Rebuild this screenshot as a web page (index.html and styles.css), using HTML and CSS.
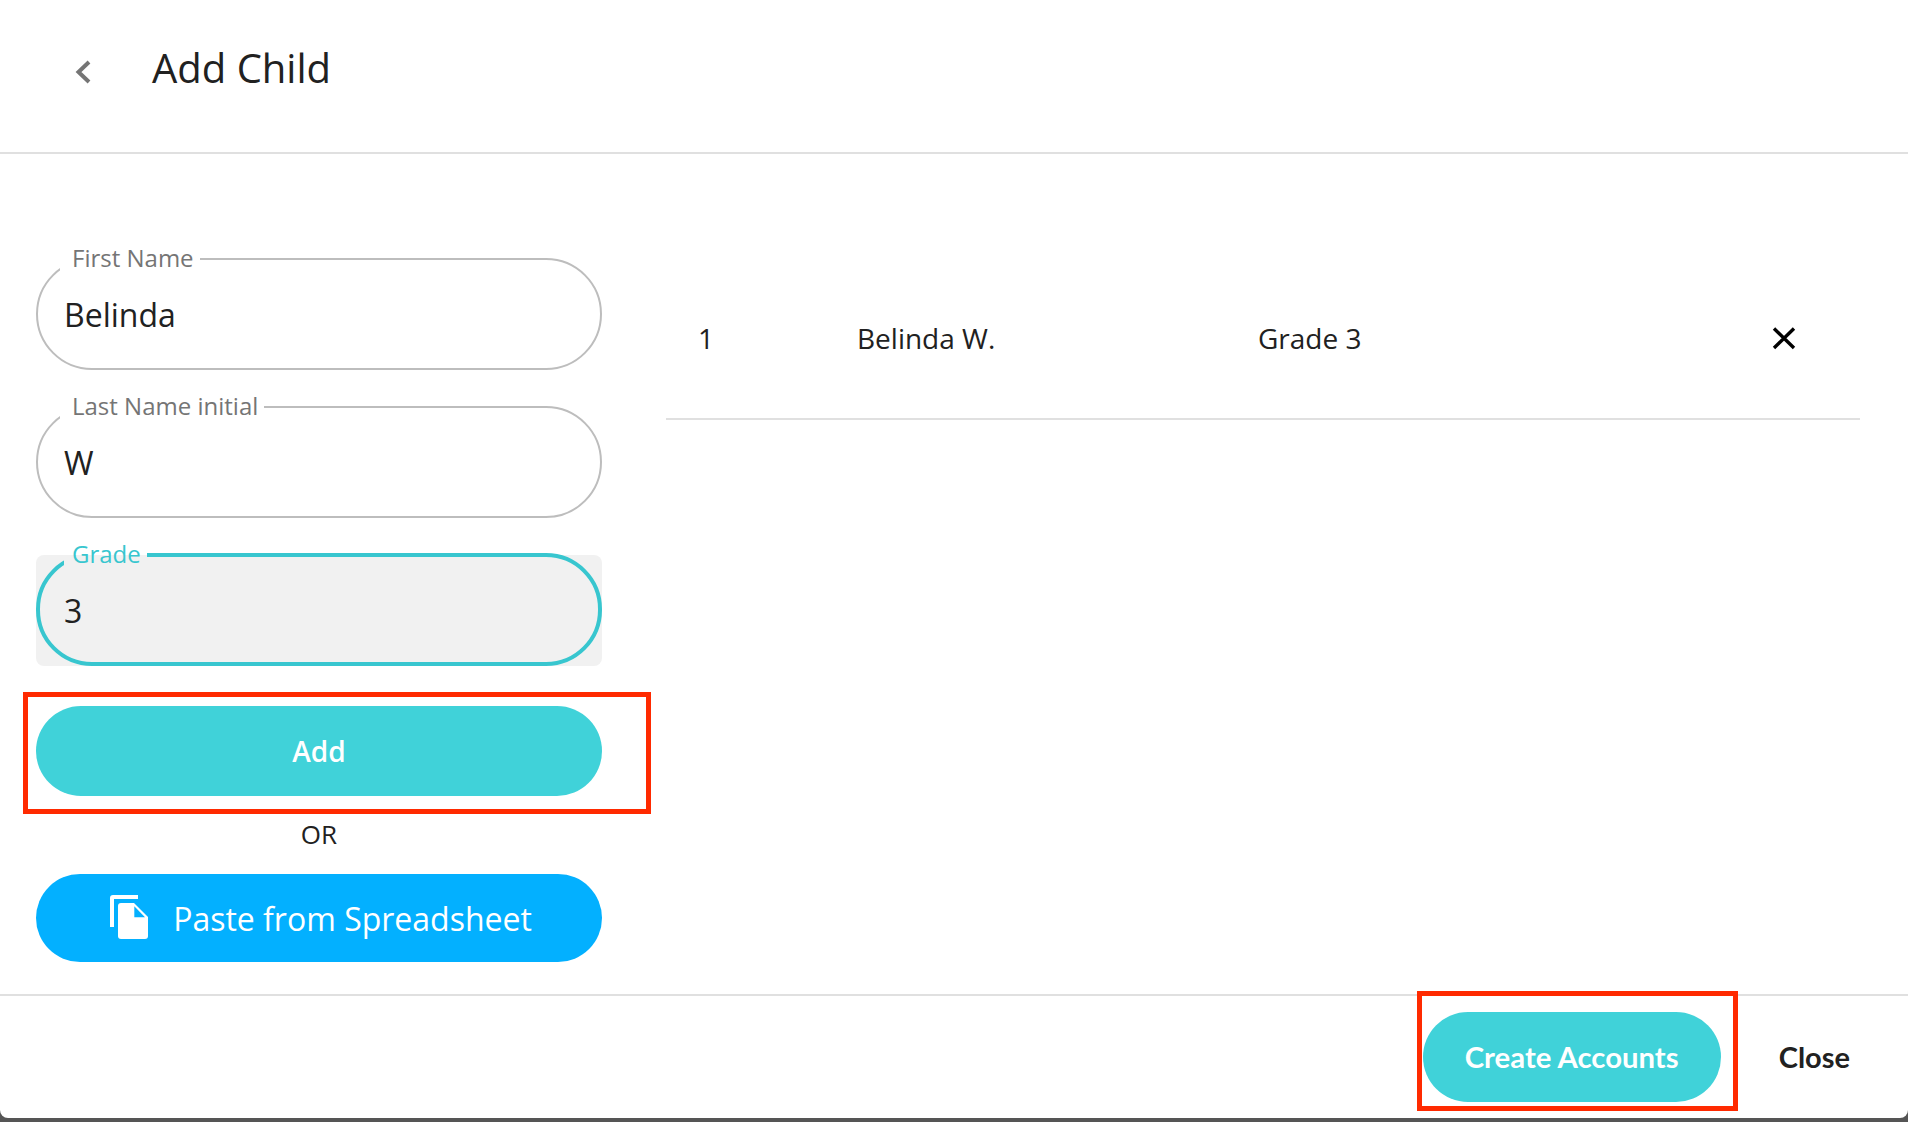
FILE: index.html
```html
<!DOCTYPE html>
<html lang="en">
<head>
<meta charset="utf-8">
<title>Add Child</title>
<link rel="stylesheet" href="styles.css">
</head>
<body>
<main class="modal">
  <header class="header">
    <button class="back" aria-label="Back">
      <svg class="back-icon" viewBox="0 0 16 24"><path d="M14 2 3.5 12 14 22"/></svg>
    </button>
    <h1 class="title">Add Child</h1>
  </header>
  <section class="body">
    <form class="form">
      <div class="fields">
        <div class="field">
          <fieldset class="outline">
            <legend class="label">First Name</legend>
            <input class="input" value="Belinda">
          </fieldset>
        </div>
        <div class="field">
          <fieldset class="outline">
            <legend class="label">Last Name initial</legend>
            <input class="input" value="W">
          </fieldset>
        </div>
        <div class="field field-focused">
          <fieldset class="outline">
            <legend class="label">Grade</legend>
            <input class="input" value="3">
          </fieldset>
        </div>
      </div>
      <div class="add-wrap">
        <button type="button" class="btn btn-teal btn-add">Add</button>
        <span class="mark mark-add"></span>
      </div>
      <div class="or">OR</div>
      <button type="button" class="btn btn-paste">
        <svg class="paste-icon" viewBox="0 0 38 44">
          <path class="paste-white" d="M0 32V3a3 3 0 0 1 3-3h25v4H4v28z"/>
          <path class="paste-white" d="M11 8h13l14 14v19a3 3 0 0 1-3 3H11a3 3 0 0 1-3-3V11a3 3 0 0 1 3-3z"/>
          <path class="paste-fold" d="M24.3 11.3v11H35z"/>
        </svg>
        <span>Paste from Spreadsheet</span>
      </button>
    </form>
    <div class="list">
      <div class="row">
        <span>1</span>
        <span>Belinda W.</span>
        <span>Grade 3</span>
        <svg class="remove" viewBox="0 0 24 24"><path d="M2 2.5 22 22M22 2.5 2 22"/></svg>
      </div>
    </div>
  </section>
  <footer class="footer">
    <div class="create-wrap">
      <button type="button" class="btn btn-teal btn-create">Create Accounts</button>
      <span class="mark mark-create"></span>
    </div>
    <button type="button" class="close">Close</button>
  </footer>
</main>
</body>
</html>
```
FILE: styles.css
```css
* { box-sizing: border-box; }
html, body { margin: 0; height: 100%; }
body {
  background: #555;
  font-family: "Open Sans", "Noto Sans", sans-serif;
  color: #212121;
  overflow: hidden;
}
button { font-family: inherit; border: 0; cursor: pointer; }

.modal {
  height: 1118px;
  background: #fff;
  border-radius: 0 0 8px 8px;
  display: flex;
  flex-direction: column;
}

/* header */
.header {
  height: 154px;
  flex: none;
  border-bottom: 2px solid #e0e0e0;
  display: flex;
  align-items: center;
  padding-left: 75px;
  padding-bottom: 17px;
}
.back {
  background: none;
  padding: 0;
  width: 77px;
  height: 24px;
  display: flex;
  margin-top: 8px;
}
.back-icon {
  width: 16px;
  height: 24px;
  fill: none;
  stroke: #757575;
  stroke-width: 4;
}
.title {
  margin: 0;
  font-size: 40px;
  font-weight: 400;
  line-height: 54px;
}

/* body */
.body {
  flex: 1;
  display: flex;
  gap: 64px;
  padding: 105px 48px 0 36px;
  border-bottom: 2px solid #e0e0e0;
  min-height: 0;
}
.form {
  width: 566px;
  flex: none;
  display: flex;
  flex-direction: column;
}
.fields {
  display: flex;
  flex-direction: column;
  gap: 37px;
}
.field {
  height: 111px;
  display: flex;
  flex-direction: column;
  border-radius: 8px;
}
.outline {
  margin: -13px 0 0;
  height: 124px;
  padding: 0 22px;
  border: 2px solid #bdbdbd;
  border-radius: 56px;
  min-width: 0;
}
.label {
  padding: 0 6px 2px 12px;
  font-size: 24px;
  line-height: 24px;
  color: #757575;
}
.input {
  display: block;
  width: 100%;
  height: 84px;
  padding: 0 0 0 4px;
  border: 0;
  outline: 0;
  background: transparent;
  font-family: inherit;
  font-size: 32px;
  color: #212121;
}
.field-focused { background: #f1f1f1; }
.field-focused .outline {
  border: 4px solid #38c6cf;
  padding: 0 24px 0 24px;
}
.field-focused .label { color: #38c6cf; padding-left: 8px; }
.field-focused .input { padding-left: 0; }

.btn {
  display: flex;
  align-items: center;
  justify-content: center;
  color: #fff;
}
.btn-teal { background: #40d2d9; }
.add-wrap { position: relative; margin-top: 40px; }
.btn-add {
  width: 100%;
  height: 90px;
  border-radius: 45px;
  font-size: 28px;
  font-weight: 600;
}
.or {
  margin-top: 19px;
  height: 40px;
  font-size: 26px;
  line-height: 38px;
  text-align: center;
}
.btn-paste {
  margin-top: 19px;
  height: 88px;
  width: 100%;
  border-radius: 44px;
  background: #03b0ff;
  gap: 25px;
  font-size: 32px;
  padding-left: 10px;
}
.paste-icon { width: 38px; height: 44px; margin-top: -2px; }
.paste-white { fill: #fff; }
.paste-fold { fill: #03b0ff; }

/* annotations */
.mark {
  position: absolute;
  border: 5px solid #ff2a00;
  pointer-events: none;
}
.mark-add { top: -14px; left: -13px; right: -49px; bottom: -18px; }
.mark-create { top: -21px; left: -6px; right: -17px; bottom: -9px; }

/* list */
.list { flex: 1; min-width: 0; }
.row {
  height: 161px;
  border-bottom: 2px solid #e0e0e0;
  display: grid;
  grid-template-columns: 159px 401px 1fr 24px;
  align-items: center;
  padding: 0 64px 2px 32px;
  font-size: 28px;
}
.remove {
  width: 24px;
  height: 24px;
  fill: none;
  stroke: #000;
  stroke-width: 3.4;
}

/* footer */
.footer {
  height: 122px;
  flex: none;
  display: flex;
  align-items: flex-start;
  justify-content: flex-end;
  padding: 16px 58px 0 0;
  font-family: Lato, "Open Sans", sans-serif;
}
.create-wrap { position: relative; }
.btn-create {
  width: 298px;
  height: 90px;
  padding-bottom: 2px;
  border-radius: 45px;
  font-family: inherit;
  font-size: 29.3px;
  font-weight: 700;
}
.close {
  margin-left: 58px;
  height: 90px;
  padding: 0 0 2px;
  background: none;
  font-family: inherit;
  font-size: 29px;
  font-weight: 700;
  color: #212121;
}
```
